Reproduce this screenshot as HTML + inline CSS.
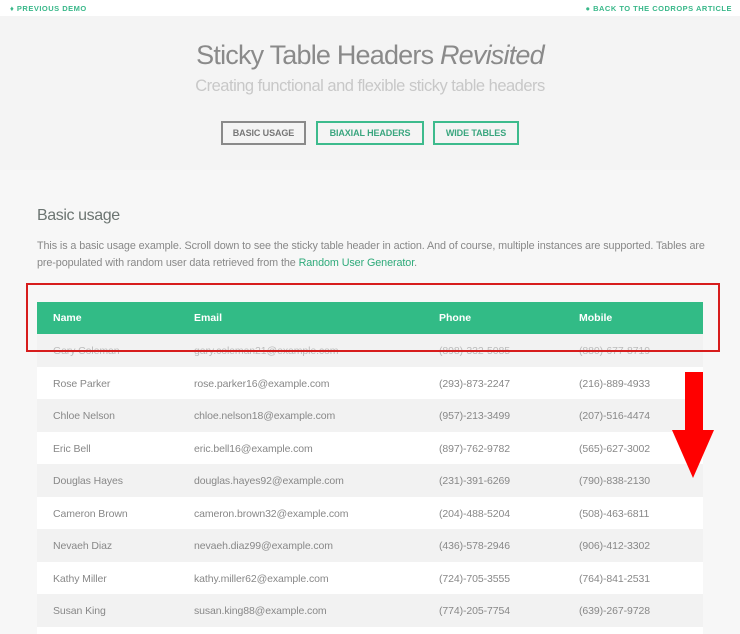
<!DOCTYPE html>
<html><head><meta charset="utf-8"><style>
*{margin:0;padding:0;box-sizing:border-box}
html,body{width:740px;height:634px;overflow:hidden}
body{background:#f7f7f7;font-family:"Liberation Sans",sans-serif;position:relative;color:#888}
.top{position:absolute;left:0;top:0;width:740px;height:16px;background:#fff;font-size:7.5px;font-weight:bold;color:#3ab88a;letter-spacing:.5px}
.top span{position:absolute;top:4px}
.hdr{position:absolute;left:0;top:16px;width:740px;height:154px;background:#f4f4f4}
h1{position:absolute;top:40px;width:740px;text-align:center;font-weight:normal;font-size:27px;color:#8a8a8a;letter-spacing:-.8px}
.sub{position:absolute;top:77px;width:740px;text-align:center;font-size:16.5px;color:#c8c8c8;letter-spacing:-.5px}
.btn{position:absolute;top:121px;height:24px;border:2px solid #3dbb8d;color:#3aa67f;font-size:9px;font-weight:bold;text-align:center;line-height:21px;letter-spacing:-.1px}
h2{position:absolute;left:37px;top:207px;font-size:16px;font-weight:normal;color:#6c7572;letter-spacing:-.4px}
.p{position:absolute;left:37px;top:238px;width:700px;font-size:10.8px;line-height:17px;color:#888;letter-spacing:-.1px;white-space:nowrap}
.p a{color:#2eaa7a;text-decoration:none}
.th{position:absolute;left:37px;top:302px;width:666px;height:32px;background:#32bb86;color:#fff;font-size:10.5px;font-weight:bold}
.row{position:absolute;left:37px;width:666px;height:33px;font-size:10.5px;color:#888;letter-spacing:-.1px}
.c{position:absolute;top:50%;transform:translateY(-50%)}
.c1{left:16px}.c2{left:157px}.c3{left:402px}.c4{left:542px}
.box{position:absolute;left:26px;top:283px;width:694px;height:69px;border:2.5px solid #d71d1d}
</style></head><body>
<div class="top"><span style="left:10px">&#9830; PREVIOUS DEMO</span><span style="right:8px">&#9679; BACK TO THE CODROPS ARTICLE</span></div>
<div class="hdr"></div>
<h1>Sticky Table Headers <i>Revisited</i></h1>
<div class="sub">Creating functional and flexible sticky table headers</div>
<div class="btn" style="left:221px;width:85px;border-color:#8a8a8a;color:#777">BASIC USAGE</div>
<div class="btn" style="left:316px;width:108px">BIAXIAL HEADERS</div>
<div class="btn" style="left:433px;width:86px">WIDE TABLES</div>
<h2>Basic usage</h2>
<div class="p">This is a basic usage example. Scroll down to see the sticky table header in action. And of course, multiple instances are supported. Tables are<br>pre-populated with random user data retrieved from the <a>Random User Generator</a>.</div>
<div class="row" style="top:334px;background:#f2f2f2;color:#bbb"><span class="c c1">Gary Coleman</span><span class="c c2">gary.coleman21@example.com</span><span class="c c3">(898)-332-5085</span><span class="c c4">(880)-677-8719</span></div>
<div class="row" style="top:367px;background:#fff"><span class="c c1">Rose Parker</span><span class="c c2">rose.parker16@example.com</span><span class="c c3">(293)-873-2247</span><span class="c c4">(216)-889-4933</span></div>
<div class="row" style="top:399px;background:#f2f2f2"><span class="c c1">Chloe Nelson</span><span class="c c2">chloe.nelson18@example.com</span><span class="c c3">(957)-213-3499</span><span class="c c4">(207)-516-4474</span></div>
<div class="row" style="top:432px;background:#fff"><span class="c c1">Eric Bell</span><span class="c c2">eric.bell16@example.com</span><span class="c c3">(897)-762-9782</span><span class="c c4">(565)-627-3002</span></div>
<div class="row" style="top:464px;background:#f2f2f2"><span class="c c1">Douglas Hayes</span><span class="c c2">douglas.hayes92@example.com</span><span class="c c3">(231)-391-6269</span><span class="c c4">(790)-838-2130</span></div>
<div class="row" style="top:497px;background:#fff"><span class="c c1">Cameron Brown</span><span class="c c2">cameron.brown32@example.com</span><span class="c c3">(204)-488-5204</span><span class="c c4">(508)-463-6811</span></div>
<div class="row" style="top:529px;background:#f2f2f2"><span class="c c1">Nevaeh Diaz</span><span class="c c2">nevaeh.diaz99@example.com</span><span class="c c3">(436)-578-2946</span><span class="c c4">(906)-412-3302</span></div>
<div class="row" style="top:562px;background:#fff"><span class="c c1">Kathy Miller</span><span class="c c2">kathy.miller62@example.com</span><span class="c c3">(724)-705-3555</span><span class="c c4">(764)-841-2531</span></div>
<div class="row" style="top:594px;background:#f2f2f2"><span class="c c1">Susan King</span><span class="c c2">susan.king88@example.com</span><span class="c c3">(774)-205-7754</span><span class="c c4">(639)-267-9728</span></div>
<div class="row" style="top:627px;height:7px;background:#fff"></div>
<div class="th"><span class="c c1">Name</span><span class="c c2">Email</span><span class="c c3">Phone</span><span class="c c4">Mobile</span></div>
<div class="box"></div>
<svg style="position:absolute;left:0;top:0" width="740" height="634"><polygon points="685,372 703,372 703,430 714,430 693,478 672,430 685,430" fill="#f00"/></svg>
</body></html>
